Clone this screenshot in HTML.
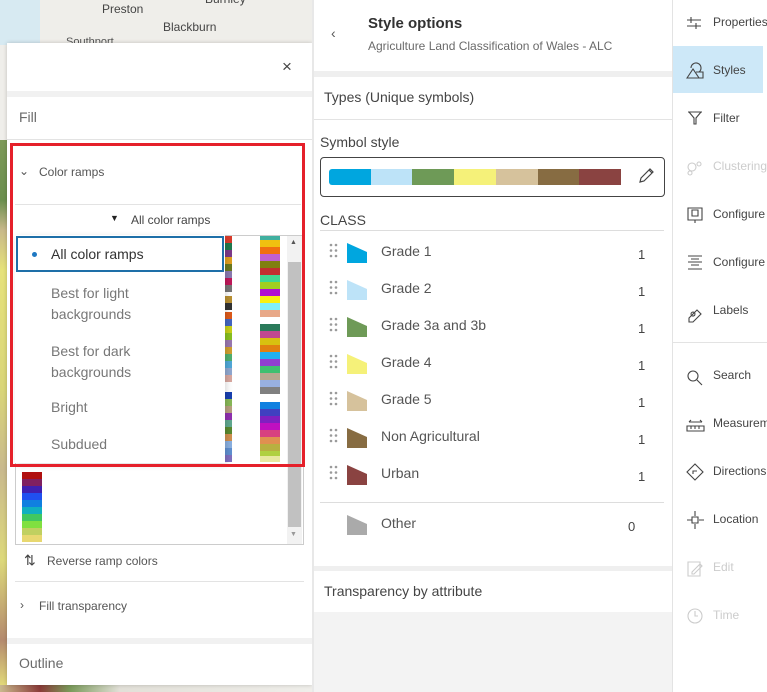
<!DOCTYPE html>
<html><head><meta charset="utf-8"><style>
*{box-sizing:border-box;margin:0;padding:0}
body{width:767px;height:692px;overflow:hidden;position:relative;font-family:"Liberation Sans",sans-serif;color:#323232;background:#fff}
.a{position:absolute}
.t{position:absolute;white-space:nowrap}
</style></head><body>
<div class="a" style="left:0;top:0;width:312px;height:692px;background:#efeeea"></div>
<div class="a" style="left:0;top:0;width:40px;height:45px;background:#d7eaf2"></div>
<div class="a" style="left:0;top:140px;width:7px;height:552px;background:linear-gradient(#7d9a58 0,#6b8f4e 60px,#c8b98a 90px,#e6e27a 130px,#d9d578 250px,#c9b98d 330px,#ddd97a 420px,#b48a6e 500px,#e8e57b 552px)"></div>
<div class="a" style="left:0;top:685px;width:312px;height:7px;background:linear-gradient(90deg,#c9b98d,#8a3b38 40px,#7a9a5a 70px,#e2e0d8 120px,#efeeea)"></div>
<div class="t" style="left:102px;top:2px;font-size:12px;color:#444">Preston</div>
<div class="t" style="left:163px;top:20px;font-size:12px;color:#444">Blackburn</div>
<div class="t" style="left:205px;top:-8px;font-size:12px;color:#444">Burnley</div>
<div class="t" style="left:66px;top:36px;font-size:11px;color:#555">Southport</div>
<div class="a" style="left:7px;top:43px;width:305px;height:642px;background:#fff;box-shadow:0 0 4px rgba(0,0,0,.2)"></div>
<div class="t" style="left:282px;top:57px;font-size:17px;color:#444">×</div>
<div class="a" style="left:7px;top:91px;width:305px;height:6px;background:#f1f1f1"></div>
<div class="t" style="left:19px;top:109px;font-size:14px;color:#6a6a6a">Fill</div>
<div class="a" style="left:7px;top:139px;width:305px;height:1px;background:#e3e3e3"></div>
<div class="t" style="left:19px;top:164px;font-size:12px;color:#555">⌄</div>
<div class="t" style="left:39px;top:165px;font-size:12px;color:#555">Color ramps</div>
<div class="a" style="left:15px;top:204px;width:286px;height:1px;background:#e3e3e3"></div>
<div class="t" style="left:110px;top:213px;font-size:9px;color:#222">▼</div>
<div class="t" style="left:131px;top:213px;font-size:12px;color:#444">All color ramps</div>
<div class="a" style="left:15px;top:235px;width:289px;height:310px;border:1px solid #ccc;background:#fff"></div>
<div class="a" style="left:287px;top:236px;width:15px;height:308px;background:#f2f2f2"></div>
<div class="a" style="left:288px;top:262px;width:13px;height:265px;background:#c1c1c1"></div>
<div class="t" style="left:290px;top:239px;font-size:7px;color:#555">▲</div>
<div class="t" style="left:290px;top:531px;font-size:7px;color:#999">▼</div>
<div class="a" style="left:225px;top:236px;width:7px;height:226px;background:linear-gradient(#d93b2b 0 7px,#1f7a4e 7px 14px,#7d3a8a 14px 21px,#e0a020 21px 28px,#6b7a20 28px 35px,#8a7ab0 35px 42px,#c0185a 42px 49px,#777 49px 56px,#fff 56px 60px,#b99032 60px 67px,#333 67px 74px,#fff 74px 76px,#dd5a1a 76px 83px,#4466c0 83px 90px,#c9d018 90px 97px,#88c020 97px 104px,#9a78b0 104px 111px,#d0a030 111px 118px,#50b070 118px 125px,#50a8d8 125px 132px,#90a8d0 132px 139px,#d8a8a0 139px 146px,#fff 146px 156px,#1840b0 156px 163px,#88b858 163px 170px,#b8a080 170px 177px,#9030b0 177px 184px,#60a890 184px 191px,#5a8a30 191px 198px,#d09050 198px 205px,#8ab0e0 205px 212px,#6090d0 212px 219px,#8070c0 219px 226px)"></div>
<div class="a" style="left:260px;top:236px;width:20px;height:226px;background:linear-gradient(#40b0a0 0 4px,#f0c010 4px 11px,#f07010 11px 18px,#c060d0 18px 25px,#808010 25px 32px,#c03030 32px 39px,#40d890 39px 46px,#a0d020 46px 53px,#b010d0 53px 60px,#f8f010 60px 67px,#80f0f8 67px 74px,#e8a888 74px 81px,#fff 81px 88px,#2a7a5a 88px 95px,#c04890 95px 102px,#d8c010 102px 109px,#e08010 109px 116px,#20b0f0 116px 123px,#9040d0 123px 130px,#40c070 130px 137px,#b8a890 137px 144px,#98b0e0 144px 151px,#808080 151px 158px,#fff 158px 166px,#1080e0 166px 173px,#4040c0 173px 180px,#8020c0 180px 187px,#c010c0 187px 194px,#d84080 194px 201px,#e09050 201px 208px,#b8b040 208px 215px,#b0d040 215px 220px,#e8e8a0 220px 226px)"></div>
<div class="a" style="left:15px;top:235px;width:210px;height:228px;background:#fff;box-shadow:2px 2px 6px rgba(0,0,0,.15)"></div>
<div class="a" style="left:16px;top:236px;width:208px;height:36px;border:2px solid #1e6fa8"></div>
<div class="a" style="left:32px;top:252px;width:5px;height:5px;border-radius:50%;background:#1e78c2"></div>
<div class="t" style="left:51px;top:246px;font-size:14px;color:#323232">All color ramps</div>
<div class="t" style="left:51px;top:283px;font-size:14px;color:#777;line-height:21px">Best for light<br>backgrounds</div>
<div class="t" style="left:51px;top:341px;font-size:14px;color:#777;line-height:21px">Best for dark<br>backgrounds</div>
<div class="t" style="left:51px;top:399px;font-size:14px;color:#777">Bright</div>
<div class="t" style="left:51px;top:436px;font-size:14px;color:#777">Subdued</div>
<div class="a" style="left:22px;top:472px;width:20px;height:70px;background:linear-gradient(#b01010 0 7px,#802060 7px 14px,#4020b0 14px 21px,#2050f0 21px 28px,#1080e0 28px 35px,#10b0c0 35px 42px,#40c860 42px 49px,#80e040 49px 56px,#c0d060 56px 63px,#e8d870 63px 70px)"></div>
<div class="a" style="left:10px;top:143px;width:295px;height:324px;border:3px solid #e5202a"></div>
<div class="t" style="left:24px;top:552px;font-size:14px;color:#444">⇅</div>
<div class="t" style="left:47px;top:554px;font-size:12px;color:#555">Reverse ramp colors</div>
<div class="a" style="left:15px;top:581px;width:289px;height:1px;background:#e3e3e3"></div>
<div class="t" style="left:20px;top:598px;font-size:12px;color:#555">›</div>
<div class="t" style="left:39px;top:599px;font-size:12px;color:#555">Fill transparency</div>
<div class="a" style="left:7px;top:638px;width:305px;height:6px;background:#f1f1f1"></div>
<div class="t" style="left:19px;top:655px;font-size:14px;color:#6a6a6a">Outline</div>
<div class="a" style="left:312px;top:0;width:360px;height:692px;background:#fff;border-left:2px solid #e8e8e8"></div>
<div class="t" style="left:331px;top:25px;font-size:14px;color:#555">‹</div>
<div class="t" style="left:368px;top:15px;font-size:15px;font-weight:bold;color:#323232">Style options</div>
<div class="t" style="left:368px;top:39px;font-size:12px;color:#6a6a6a">Agriculture Land Classification of Wales - ALC</div>
<div class="a" style="left:314px;top:71px;width:358px;height:6px;background:#efefef"></div>
<div class="t" style="left:324px;top:89px;font-size:14px;color:#444">Types (Unique symbols)</div>
<div class="a" style="left:314px;top:119px;width:358px;height:1px;background:#e3e3e3"></div>
<div class="t" style="left:320px;top:134px;font-size:14px;color:#444">Symbol style</div>
<div class="a" style="left:320px;top:157px;width:345px;height:40px;border:1px solid #444;border-radius:4px"></div>
<div class="a" style="left:329px;top:169px;width:292px;height:16px;border-radius:3px 0 0 3px;background:linear-gradient(90deg,#00a6df 0 42px,#bde3f8 42px 83px,#6e9a57 83px 125px,#f5f179 125px 167px,#d6c29c 167px 209px,#876c42 209px 250px,#8a4341 250px)"></div>
<svg class="a" style="left:637px;top:167px" width="18" height="18" viewBox="0 0 18 18"><path d="M3 15l1-4L13 2l3 3-9 9-4 1zM12 3l3 3" fill="none" stroke="#444" stroke-width="1.2"/></svg>
<div class="t" style="left:320px;top:212px;font-size:14px;color:#444">CLASS</div>
<div class="a" style="left:320px;top:230px;width:344px;height:1px;background:#ddd"></div>
<div id="rows"></div>
<div class="a" style="left:320px;top:502px;width:344px;height:1px;background:#ddd"></div>
<svg class="a" style="left:347px;top:515px" width="20" height="20"><path d="M0 0L20 9V20H0Z" fill="#aaa"/></svg>
<div class="t" style="left:381px;top:515px;font-size:14px;color:#555">Other</div>
<div class="t" style="left:628px;top:519px;font-size:13px;color:#444">0</div>
<div class="a" style="left:314px;top:566px;width:358px;height:5px;background:#efefef"></div>
<div class="t" style="left:324px;top:583px;font-size:14px;color:#444">Transparency by attribute</div>
<div class="a" style="left:314px;top:612px;width:358px;height:80px;background:#f3f3f3"></div>
<div class="a" style="left:672px;top:0;width:95px;height:692px;background:#fff;border-left:1px solid #e3e3e3"></div>
<div class="a" style="left:673px;top:46px;width:90px;height:47px;background:#cde8f8"></div>
<div class="a" style="left:673px;top:342px;width:94px;height:1px;background:#e3e3e3"></div>
<div style="position:absolute;left:0;top:0;font-size:12px;color:#444">
<div class="t" style="left:713px;top:15px">Properties</div>
<div class="t" style="left:713px;top:63px">Styles</div>
<div class="t" style="left:713px;top:111px">Filter</div>
<div class="t" style="left:713px;top:159px;color:#ccc">Clustering</div>
<div class="t" style="left:713px;top:207px">Configure</div>
<div class="t" style="left:713px;top:255px">Configure</div>
<div class="t" style="left:713px;top:303px">Labels</div>
<div class="t" style="left:713px;top:368px">Search</div>
<div class="t" style="left:713px;top:416px">Measurement</div>
<div class="t" style="left:713px;top:464px">Directions</div>
<div class="t" style="left:713px;top:512px">Location</div>
<div class="t" style="left:713px;top:560px;color:#ccc">Edit</div>
<div class="t" style="left:713px;top:608px;color:#ccc">Time</div>
</div>
<svg class="a" style="left:686px;top:12px" width="80" height="620" fill="none" stroke="#444" stroke-width="1.1">
<path d="M1 8h14M1 14h14M5 5v6M10 11v6"/>
<path d="M1 66l6-9 6 9zM5 56a5 5 0 1 1 8 4M10 60h7v6h-6"/>
<path d="M2 100h14M3 100l5 6v6h2v-6l5-6"/>
<g stroke="#ccc"><circle cx="6" cy="155" r="4"/><circle cx="13" cy="152" r="2"/><circle cx="4" cy="161" r="2"/></g>
<path d="M2 196h14v12H2zM6 198h6v6H6zM9 208v3"/>
<path d="M2 244h14M5 247h8M2 250h14M5 253h8M2 257h14"/>
<path d="M3 306l8-8 4 4-8 8H3zM5 302a2 2 0 1 1 0 .1"/>
<path d="M2 364a5 5 0 1 0 10 0a5 5 0 1 0-10 0M11 368l5 5"/>
<path d="M1 414h17v5H1zM5 414v3M9 414v3M13 414v3M3 410h13M3 410l2-2M16 410l-2-2"/>
<path d="M9 452l8 8-8 8-8-8zM7 462v-3h4"/>
<path d="M1 508h5M13 508h5M9 499v5M9 512v5M6 505h6v6H6z"/>
<g stroke="#ccc"><path d="M2 550h12v14H2zM6 560l8-8 2 2-8 8H6z"/><circle cx="9" cy="604" r="7"/><path d="M9 599v5h3"/></g>
</svg>
<script>
var r=[["Grade 1","#00a6df"],["Grade 2","#bde3f8"],["Grade 3a and 3b","#6e9a57"],["Grade 4","#f5f179"],["Grade 5","#d6c29c"],["Non Agricultural","#876c42"],["Urban","#8a4341"]],h="";
r.forEach(function(x,i){var y=243+i*37;
h+='<svg class="a" style="left:329px;top:'+y+'px" width="10" height="16" fill="#9a9a9a"><circle cx="2" cy="2" r="1.3"/><circle cx="7" cy="2" r="1.3"/><circle cx="2" cy="7.5" r="1.3"/><circle cx="7" cy="7.5" r="1.3"/><circle cx="2" cy="13" r="1.3"/><circle cx="7" cy="13" r="1.3"/></svg>';
h+='<svg class="a" style="left:347px;top:'+y+'px" width="20" height="20"><path d="M0 0L20 9V20H0Z" fill="'+x[1]+'"/></svg>';
h+='<div class="t" style="left:381px;top:'+y+'px;font-size:14px;color:#555">'+x[0]+'</div>';
h+='<div class="t" style="left:638px;top:'+(y+4)+'px;font-size:13px;color:#444">1</div>';});
document.getElementById("rows").outerHTML=h;
</script>
</body></html>
